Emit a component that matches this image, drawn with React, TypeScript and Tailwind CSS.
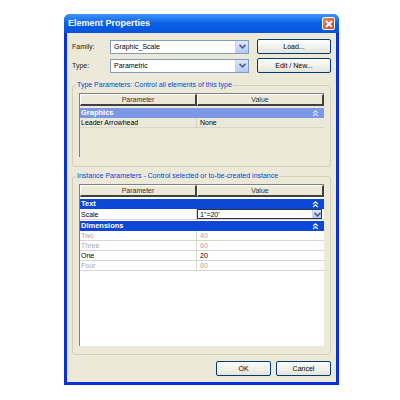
import React from 'react';

const font = { fontFamily: '"Liberation Sans", "DejaVu Sans", sans-serif' };

function DropArrow({ small }: { small?: boolean }) {
  return (
    <div
      className={`h-full ${small ? 'w-[9px]' : 'w-[13px]'} flex items-center justify-center bg-gradient-to-b from-[#dfe8fd] to-[#b4c8f6] border-l border-[#c3d3fd]`}
    >
      <svg width="7" height="5" viewBox="0 0 7 5">
        <path d="M0.5 0.8 L3.5 3.8 L6.5 0.8" stroke="#4d6185" strokeWidth="1.6" fill="none" />
      </svg>
    </div>
  );
}

function Combo({ value }: { value: string }) {
  return (
    <div className="flex items-stretch w-[139px] h-[14px] bg-white border border-[#7f9db9]">
      <div className="flex-1 flex items-center pl-[3px] text-[7px] text-black leading-none">{value}</div>
      <DropArrow />
    </div>
  );
}

function Btn({ label, w }: { label: string; w: string }) {
  return (
    <div
      className={`${w} h-[15px] flex items-center justify-center rounded-[2px] border border-[#003c74] bg-gradient-to-b from-white to-[#e6e4da] text-[7px] text-black leading-none`}
    >
      {label}
    </div>
  );
}

function Chevrons({ color }: { color: string }) {
  return (
    <svg width="7" height="7" viewBox="0 0 7 7" className="mr-[5px]">
      <path d="M1 3.2 L3.5 0.8 L6 3.2 M1 6.2 L3.5 3.8 L6 6.2" stroke={color} strokeWidth="1.1" fill="none" />
    </svg>
  );
}

function Header() {
  return (
    <div className="flex h-[12px] text-[7px] leading-none text-[#333]">
      <div className="w-[117px] flex items-center justify-center bg-[#ece9d8] border-r-2 border-b-2 border-[#404040] border-t border-l border-t-white border-l-white">
        Parameter
      </div>
      <div className="flex-1 flex items-center justify-center bg-[#ece9d8] border-r-2 border-b-2 border-[#404040] border-t border-l border-t-white border-l-white">
        Value
      </div>
    </div>
  );
}

function GroupRow({ label, bg, chev }: { label: string; bg: string; chev: string }) {
  return (
    <div className={`flex items-center justify-between h-[10px] ${bg}`}>
      <span className="pl-[1px] text-[7.5px] font-bold text-white leading-none">{label}</span>
      <Chevrons color={chev} />
    </div>
  );
}

function Row({ name, value, dim, bg }: { name: string; value: string; dim?: boolean; bg: string }) {
  const c = dim ? 'text-[#a8a8a8]' : 'text-black';
  return (
    <div className={`flex h-[10px] border-b border-[#d8d6cc] text-[7px] leading-none ${bg} ${c}`}>
      <div className="w-[117px] flex items-center pl-[1px] border-r border-[#d8d6cc]">{name}</div>
      <div className="flex-1 flex items-center pl-[3px]">{value}</div>
    </div>
  );
}

export default function App() {
  return (
    <div className="w-[400px] h-[400px] bg-white pt-[14px] pl-[64px]" style={font}>
      <div className="w-[275px] h-[371px] flex flex-col rounded-t-[6px] bg-[#0831d9] px-[3px] pb-[3px]">
        {/* Title bar */}
        <div className="h-[19px] flex items-center justify-between rounded-t-[6px] bg-gradient-to-b from-[#3d95ff] via-[#0a5fe6] to-[#0853dc] -mx-[3px] px-[4px]">
          <span className="text-[9px] font-bold text-white leading-none">Element Properties</span>
          <div className="w-[13px] h-[13px] rounded-[2px] border border-white bg-gradient-to-br from-[#e9866a] to-[#cc3f1c] flex items-center justify-center">
            <svg width="8" height="8" viewBox="0 0 8 8">
              <path d="M1 1 L7 7 M7 1 L1 7" stroke="white" strokeWidth="1.8" />
            </svg>
          </div>
        </div>

        {/* Body */}
        <div className="flex-1 flex flex-col bg-[#ece9d8] px-[5px] pt-[6px]">
          <div className="flex items-center h-[15px]">
            <span className="w-[38px] text-[7px] text-[#222] leading-none">Family:</span>
            <Combo value="Graphic_Scale" />
            <div className="ml-[8px]">
              <Btn label="Load..." w="w-[74px]" />
            </div>
          </div>
          <div className="flex items-center h-[15px] mt-[4px]">
            <span className="w-[38px] text-[7px] text-[#222] leading-none">Type:</span>
            <Combo value="Parametric" />
            <div className="ml-[8px]">
              <Btn label="Edit / New..." w="w-[74px]" />
            </div>
          </div>

          {/* Type parameters */}
          <fieldset className="mt-[7px] h-[87px] border border-[#d0d0bf] rounded-[3px] px-[6px] pb-[6px] pt-[3px]">
            <legend className="text-[7px] text-[#0046d5] leading-[10px] px-[1px] -ml-[3px] whitespace-nowrap">
              Type Parameters: Control all elements of this type
            </legend>
            <div className="h-[64px] flex flex-col border-l border-t border-[#808080] bg-[#ece9d8]">
              <Header />
              <div className="h-[2px]" />
              <GroupRow label="Graphics" bg="bg-[#7b98e6]" chev="#dce4f8" />
              <Row name="Leader Arrowhead" value="None" bg="bg-[#ece9d8]" />
            </div>
          </fieldset>

          {/* Instance parameters */}
          <fieldset className="mt-[4px] h-[184px] border border-[#d0d0bf] rounded-[3px] px-[6px] pb-[6px] pt-[3px]">
            <legend className="text-[7px] text-[#0046d5] leading-[10px] px-[1px] -ml-[3px] whitespace-nowrap">
              Instance Parameters - Control selected or to-be-created instance
            </legend>
            <div className="h-[162px] flex flex-col border-l border-t border-[#808080] bg-white">
              <Header />
              <div className="h-[2px]" />
              <GroupRow label="Text" bg="bg-[#0c47d7]" chev="#ffffff" />
              <div className="flex h-[11px] border-b border-[#d8d6cc] text-[7px] leading-none bg-white">
                <div className="w-[117px] flex items-center pl-[1px] border-r border-[#d8d6cc]">Scale</div>
                <div className="flex-1 flex items-stretch border border-[#333] mr-[2px]">
                  <div className="flex-1 flex items-center pl-[2px]">1"=20'</div>
                  <DropArrow small />
                </div>
              </div>
              <div className="h-[1px]" />
              <GroupRow label="Dimensions" bg="bg-[#0c47d7]" chev="#ffffff" />
              <Row name="Two" value="40" dim bg="bg-white" />
              <Row name="Three" value="60" dim bg="bg-white" />
              <Row name="One" value="20" bg="bg-white" />
              <Row name="Four" value="80" dim bg="bg-white" />
            </div>
          </fieldset>

          <div className="flex justify-end gap-[5px] mt-[6px]">
            <Btn label="OK" w="w-[55px]" />
            <Btn label="Cancel" w="w-[55px]" />
          </div>
        </div>
      </div>
    </div>
  );
}
